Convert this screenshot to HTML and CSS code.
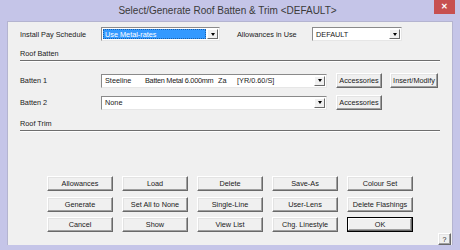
FILE: index.html
```html
<!DOCTYPE html>
<html>
<head>
<meta charset="utf-8">
<link rel="stylesheet" href="styles.css">
</head>
<body>
<div class="window">
  <div class="titlebar">
    <div class="title">Select/Generate Roof Batten &amp; Trim &lt;DEFAULT&gt;</div>
    <div class="close">&#x2715;</div>
  </div>
  <div class="client">
    <div class="row row-top">
      <span class="label lbl-main">Install Pay Schedule</span>
      <div class="combo combo-pay focused"><span class="combo-text"><span class="sel">Use Metal-rates</span></span><span class="arrow"></span></div>
      <span class="label lbl-allow">Allowances in Use</span>
      <div class="combo combo-allow"><span class="combo-text">DEFAULT</span><span class="arrow"></span></div>
    </div>
    <div class="heading">Roof Batten</div>
    <div class="row row-b1">
      <span class="label lbl-main">Batten 1</span>
      <div class="combo combo-batten"><span class="combo-text"><span class="c1">Steeline</span><span class="c2">Batten Metal 6.000mm</span><span class="c3">Za</span><span>[YR/0.60/S]</span></span><span class="arrow"></span></div>
      <div class="btn btn-acc">Accessories</div>
      <div class="btn btn-ins">Insert/Modify</div>
    </div>
    <div class="row row-b2">
      <span class="label lbl-main">Batten 2</span>
      <div class="combo combo-batten"><span class="combo-text">None</span><span class="arrow"></span></div>
      <div class="btn btn-acc">Accessories</div>
    </div>
    <div class="heading heading-trim">Roof Trim</div>
    <div class="grid">
      <div class="btn">Allowances</div>
      <div class="btn">Load</div>
      <div class="btn">Delete</div>
      <div class="btn">Save-As</div>
      <div class="btn">Colour Set</div>
      <div class="btn">Generate</div>
      <div class="btn">Set All to None</div>
      <div class="btn">Single-Line</div>
      <div class="btn">User-Lens</div>
      <div class="btn">Delete Flashings</div>
      <div class="btn">Cancel</div>
      <div class="btn">Show</div>
      <div class="btn">View List</div>
      <div class="btn">Chg. Linestyle</div>
      <div class="btn btn-default">OK</div>
    </div>
    <div class="help-row"><div class="btn help">?</div></div>
  </div>
</div>
</body>
</html>
```

FILE: styles.css
```css
html, body {
  margin: 0;
  padding: 0;
  background: #c5c5e8;
}
.window {
  width: 460px;
  height: 250px;
  background: #c5c5e8;
  display: flex;
  flex-direction: column;
  font-family: "Liberation Sans", Arial, sans-serif;
  font-size: 7.3px;
  color: #1a1a1a;
}
.titlebar {
  height: 21px;
  display: flex;
  align-items: flex-start;
}
.title {
  flex: 1;
  padding-left: 21px;
  text-align: center;
  font-size: 10px;
  line-height: 10px;
  padding-top: 6px;
  color: #3a3a3a;
}
.close {
  width: 21px;
  height: 14px;
  margin-right: 5px;
  background: #c75050;
  color: #fff;
  font-size: 8px;
  line-height: 14px;
  text-align: center;
  font-weight: bold;
}
.client {
  margin: 0 7px 0 7px;
  height: 224px;
  box-sizing: border-box;
  background: #f0f0f0;
  border: 1px solid #b4b4d0;
  border-bottom: none;
  padding: 5px 12px 0 12px;
  display: flex;
  flex-direction: column;
}
.row {
  display: flex;
  align-items: center;
}
.label {
  display: inline-block;
}
.lbl-main { width: 81px; }
.lbl-allow { width: 75px; margin-left: 17px; }
.row-top { height: 14px; }
.combo {
  height: 14px;
  box-sizing: border-box;
  background: #fff;
  border: 1px solid;
  border-color: #8a8a8a #e6e6e6 #e6e6e6 #8a8a8a;
  display: flex;
  align-items: stretch;
  padding: 1px;
}
.combo-text {
  flex: 1;
  display: flex;
  align-items: center;
  padding-left: 2px;
  white-space: nowrap;
  overflow: hidden;
}
.focused .combo-text { padding-left: 0; }
.sel {
  background: #3399ff;
  color: #fff;
  align-self: stretch;
  flex: 1;
  display: flex;
  align-items: center;
  padding-left: 2px;
  outline: 1px dotted #1c5fa8;
  outline-offset: -1px;
}
.combo-pay { width: 119px; }
.combo-allow { width: 90px; }
.combo-batten { width: 226px; }
.arrow {
  width: 11px;
  background: #f0f0f0;
  border: 1px solid;
  border-color: #fff #6a6a6a #6a6a6a #fff;
  box-sizing: border-box;
  margin-left: 1px;
  display: flex;
  align-items: center;
  justify-content: center;
}
.arrow::before {
  content: "";
  border-left: 2.5px solid transparent;
  border-right: 2.5px solid transparent;
  border-top: 3px solid #000;
}
.heading {
  margin-top: 7px;
  height: 12px;
  line-height: 12px;
  border-bottom: 1px solid #6e6e6e;
  box-shadow: 0 1px 0 #ffffff;
}
.heading-trim { margin-top: 8px; }
.row-b1 { margin-top: 12px; height: 15px; }
.row-b2 { margin-top: 7px; height: 15px; }
.c1 { display: inline-block; width: 40px; }
.c2 { display: inline-block; width: 73px; letter-spacing: -0.25px; white-space: nowrap; }
.c3 { display: inline-block; width: 19px; }
.btn {
  box-sizing: border-box;
  height: 15px;
  background: #f0f0f0;
  border: 1px solid;
  border-color: #ffffff #696969 #696969 #ffffff;
  box-shadow: inset -1px -1px 0 #a0a0a0, inset 1px 1px 0 #e3e3e3;
  display: flex;
  align-items: center;
  justify-content: center;
  white-space: nowrap;
}
.btn-acc { width: 46px; margin-left: 9px; }
.btn-ins { width: 48px; margin-left: 8px; }
.grid {
  margin-top: 45px;
  margin-left: 27px;
  display: grid;
  grid-template-columns: repeat(5, 66px);
  grid-auto-rows: 15px;
  column-gap: 9px;
  row-gap: 5.5px;
}
.btn-default {
  border-color: #000;
  box-shadow: inset -1px -1px 0 #696969, inset 1px 1px 0 #ffffff, inset -2px -2px 0 #a0a0a0;
}
.help-row {
  display: flex;
  justify-content: flex-end;
  margin-right: -11px;
  margin-top: 1px;
}
.help {
  width: 13px;
  height: 12px;
  font-size: 7px;
}
```
